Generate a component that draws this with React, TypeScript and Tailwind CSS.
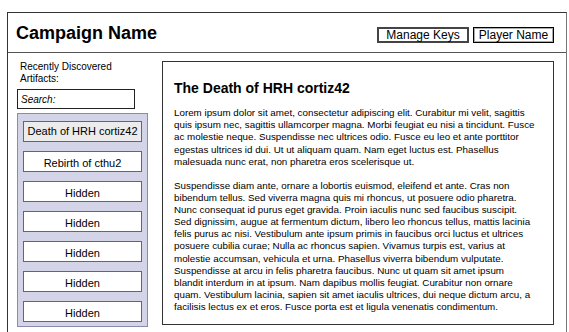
export default function App() {
  const artifacts = [
    { title: "Death of HRH cortiz42", active: true },
    { title: "Rebirth of cthu2" },
    { title: "Hidden" },
    { title: "Hidden" },
    { title: "Hidden" },
    { title: "Hidden" },
    { title: "Hidden" },
  ];

  const para1 = [
    "Lorem ipsum dolor sit amet, consectetur adipiscing elit. Curabitur mi velit, sagittis",
    "quis ipsum nec, sagittis ullamcorper magna. Morbi feugiat eu nisi a tincidunt. Fusce",
    "ac molestie neque. Suspendisse nec ultrices odio. Fusce eu leo et ante porttitor",
    "egestas ultrices id dui. Ut ut aliquam quam. Nam eget luctus est. Phasellus",
    "malesuada nunc erat, non pharetra eros scelerisque ut.",
  ];

  const para2 = [
    "Suspendisse diam ante, ornare a lobortis euismod, eleifend et ante. Cras non",
    "bibendum tellus. Sed viverra magna quis mi rhoncus, ut posuere odio pharetra.",
    "Nunc consequat id purus eget gravida. Proin iaculis nunc sed faucibus suscipit.",
    "Sed dignissim, augue at fermentum dictum, libero leo rhoncus tellus, mattis lacinia",
    "felis purus ac nisi. Vestibulum ante ipsum primis in faucibus orci luctus et ultrices",
    "posuere cubilia curae; Nulla ac rhoncus sapien. Vivamus turpis est, varius at",
    "molestie accumsan, vehicula et urna. Phasellus viverra bibendum vulputate.",
    "Suspendisse at arcu in felis pharetra faucibus. Nunc ut quam sit amet ipsum",
    "blandit interdum in at ipsum. Nam dapibus mollis feugiat. Curabitur non ornare",
    "quam. Vestibulum lacinia, sapien sit amet iaculis ultrices, dui neque dictum arcu, a",
    "facilisis lectus ex et eros. Fusce porta est et ligula venenatis condimentum.",
  ];

  return (
    <div className="w-[569px] h-[332px] overflow-hidden bg-white pt-3 pl-[7px] pr-[2px] font-['Liberation_Sans',Arial,sans-serif] text-black">
      <div className="h-[340px] border border-[#333] border-r-[#777]">
        {/* Header */}
        <div className="h-[40px] border-b border-[#555] flex items-center justify-between pl-2 pr-3">
          <h1 className="text-[18px] font-bold leading-none">Campaign Name</h1>
          <div className="flex gap-1 mt-1">
            <button className="w-[92px] h-[16px] border-2 border-[#444] text-[12px] leading-none flex items-center justify-center">
              Manage Keys
            </button>
            <button className="w-[81px] h-[16px] border border-black shadow-[inset_0_0_0_1px_#aaa] text-[12px] leading-none flex items-center justify-center">
              Player Name
            </button>
          </div>
        </div>

        <div className="flex pl-[9px] pt-2">
          {/* Sidebar */}
          <div className="w-[131px]">
            <p className="text-[10px] leading-[12px] pl-[3px]">
              Recently Discovered
              <br />
              Artifacts:
            </p>
            <div className="mt-[4px] w-[118px] h-[20px] border border-[#222] flex items-center pl-[3px] text-[10px] italic">
              Search:
            </div>
            <div className="mt-[4px] h-[214px] bg-[#d4d4e8] border border-[#8a8ab0] px-[5px] pt-[7px] flex flex-col gap-[9px]">
              {artifacts.map((a, idx) => (
                <div
                  key={idx}
                  className={`h-[21px] border-[1.5px] border-[#666] flex items-center justify-center text-[11px] leading-none ${
                    a.active ? "bg-[#ececec]" : "bg-white pt-[3px]"
                  }`}
                >
                  {a.title}
                </div>
              ))}
            </div>
          </div>

          {/* Main */}
          <div className="ml-[14px] w-[392px] h-[264px] border border-[#333] pl-[11px] pr-[4px] pt-[17px]">
            <h2 className="text-[14px] font-bold leading-[18px]">The Death of HRH cortiz42</h2>
            <div className="mt-[10px] text-[9.8px] leading-[12.2px] whitespace-nowrap">
              {para1.map((line, i) => (
                <div key={i}>{line}</div>
              ))}
            </div>
            <div className="mt-[12px] text-[9.8px] leading-[12.1px] whitespace-nowrap">
              {para2.map((line, i) => (
                <div key={i}>{line}</div>
              ))}
            </div>
          </div>
        </div>
      </div>
    </div>
  );
}
